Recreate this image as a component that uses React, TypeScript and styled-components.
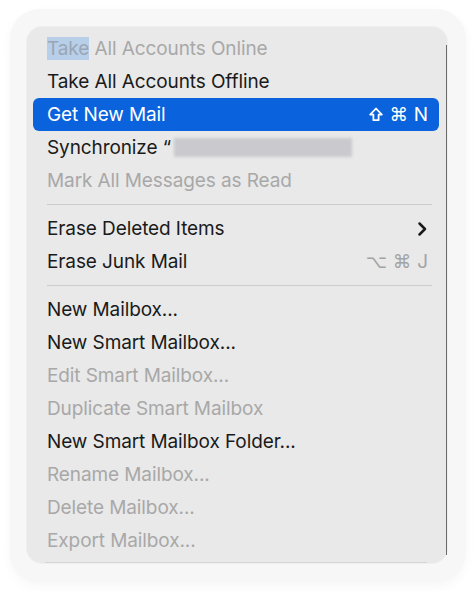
import React from "react";
import styled, { createGlobalStyle } from "styled-components";

const Global = createGlobalStyle`
  html, body { margin: 0; padding: 0; background: #ffffff; }
  body { font-family: "Inter", "Liberation Sans", sans-serif; -webkit-font-smoothing: antialiased; }
`;

const Page = styled.div`
  width: 474px;
  height: 591px;
  display: flex;
  justify-content: flex-start;
  align-items: flex-start;
  padding: 9px 0 0 10px;
  box-sizing: border-box;
`;

const Halo = styled.div`
  width: 456px;
  padding: 18px 18px 20px 17px;
  box-sizing: border-box;
  border-radius: 30px;
  background: #f7f7f7;
  box-shadow: 0 4px 12px rgba(0, 0, 0, 0.035);
`;

const Panel = styled.div`
  position: relative;
  width: 420px;
  box-sizing: border-box;
  padding: 5px 8px 6px 6px;
  background: #e9e9e9;
  border-radius: 15px;
  display: flex;
  flex-direction: column;
  box-shadow: 0 0 0 1px #efefef;

  &::after {
    content: "";
    position: absolute;
    right: 0;
    top: 18px;
    bottom: 8px;
    width: 1.5px;
    background: #6a6a6a;
  }
  &::before {
    content: "";
    position: absolute;
    left: 18px;
    right: 20px;
    bottom: 0;
    height: 1px;
    background: #d6d6d6;
  }
`;

const Row = styled.div<{ $active?: boolean; $disabled?: boolean }>`
  height: 33px;
  display: flex;
  align-items: center;
  justify-content: space-between;
  padding: 0 11px 0 14px;
  border-radius: 6px;
  font-size: 19px;
  letter-spacing: -0.1px;
  color: ${(p) => (p.$active ? "#ffffff" : p.$disabled ? "#a8a8a8" : "#1a1a1a")};
  background: ${(p) => (p.$active ? "#0a63dc" : "transparent")};
`;

const Label = styled.span`
  display: flex;
  align-items: center;
  white-space: nowrap;
`;

const Selected = styled.span`
  background: #b8cfe9;
  color: #9aa6b4;
`;

const Blur = styled.span`
  display: inline-block;
  width: 178px;
  height: 19px;
  margin-left: 3px;
  background: #c9c9ce;
  filter: blur(1.8px);
`;

const Shortcut = styled.span<{ $dim?: boolean }>`
  font-family: "DejaVu Sans", "Inter", sans-serif;
  font-size: 18.5px;
  display: flex;
  gap: 6px;
  align-items: center;
  color: ${(p) => (p.$dim ? "#a3a3a3" : "inherit")};
`;

const Letter = styled.span`
  font-family: "Inter", "Liberation Sans", sans-serif;
  font-size: 19px;
`;

const Separator = styled.div`
  height: 1px;
  margin: 7px 7px 7px 14px;
  background: #cdcdcd;
`;

const ShiftIcon = () => (
  <svg width="14" height="15" viewBox="0 0 14 15">
    <path
      d="M7 1.5 L12.8 7.6 H9.6 V13.2 H4.4 V7.6 H1.2 Z"
      fill="none"
      stroke="currentColor"
      strokeWidth="1.8"
      strokeLinejoin="round"
    />
  </svg>
);

const Chevron = () => (
  <svg width="12" height="16" viewBox="0 0 12 16">
    <path d="M3.5 2.5 L9 8 L3.5 13.5" fill="none" stroke="#1a1a1a" strokeWidth="2.5" strokeLinecap="round" strokeLinejoin="round" />
  </svg>
);

export default function App() {
  return (
    <>
      <Global />
      <Page>
        <Halo>
          <Panel>
            <Row $disabled>
              <Label>
                <Selected>Take</Selected>&nbsp;All Accounts Online
              </Label>
            </Row>
            <Row>
              <Label>Take All Accounts Offline</Label>
            </Row>
            <Row $active>
              <Label>Get New Mail</Label>
              <Shortcut>
                <ShiftIcon />
                <span>⌘</span>
                <Letter>N</Letter>
              </Shortcut>
            </Row>
            <Row>
              <Label>
                Synchronize “<Blur />
              </Label>
            </Row>
            <Row $disabled>
              <Label>Mark All Messages as Read</Label>
            </Row>
            <Separator />
            <Row>
              <Label>Erase Deleted Items</Label>
              <Chevron />
            </Row>
            <Row>
              <Label>Erase Junk Mail</Label>
              <Shortcut $dim>
                <span>⌥</span>
                <span>⌘</span>
                <Letter>J</Letter>
              </Shortcut>
            </Row>
            <Separator />
            <Row>
              <Label>New Mailbox...</Label>
            </Row>
            <Row>
              <Label>New Smart Mailbox...</Label>
            </Row>
            <Row $disabled>
              <Label>Edit Smart Mailbox...</Label>
            </Row>
            <Row $disabled>
              <Label>Duplicate Smart Mailbox</Label>
            </Row>
            <Row>
              <Label>New Smart Mailbox Folder...</Label>
            </Row>
            <Row $disabled>
              <Label>Rename Mailbox...</Label>
            </Row>
            <Row $disabled>
              <Label>Delete Mailbox...</Label>
            </Row>
            <Row $disabled>
              <Label>Export Mailbox...</Label>
            </Row>
          </Panel>
        </Halo>
      </Page>
    </>
  );
}
